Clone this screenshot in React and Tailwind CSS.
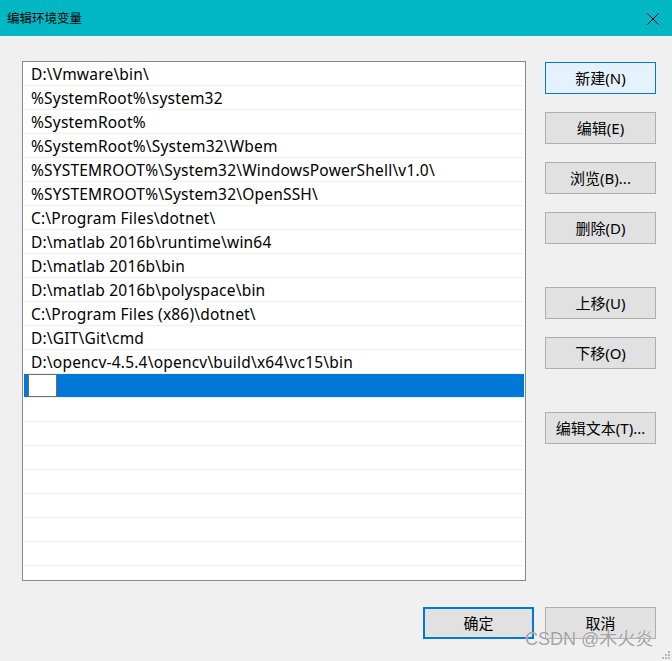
const paths = [
  'D:\\Vmware\\bin\\',
  '%SystemRoot%\\system32',
  '%SystemRoot%',
  '%SystemRoot%\\System32\\Wbem',
  '%SYSTEMROOT%\\System32\\WindowsPowerShell\\v1.0\\',
  '%SYSTEMROOT%\\System32\\OpenSSH\\',
  'C:\\Program Files\\dotnet\\',
  'D:\\matlab 2016b\\runtime\\win64',
  'D:\\matlab 2016b\\bin',
  'D:\\matlab 2016b\\polyspace\\bin',
  'C:\\Program Files (x86)\\dotnet\\',
  'D:\\GIT\\Git\\cmd',
  'D:\\opencv-4.5.4\\opencv\\build\\x64\\vc15\\bin',
]

const font = { fontFamily: '"Noto Sans", "Noto Sans CJK SC", sans-serif' }

const Button = ({ children, focused = false, primary = false, className = '' }) => (
  <div
    className={`w-[111px] h-[32px] flex items-center justify-center text-[15px] text-black ${
      primary
        ? 'border-2 border-[#0078d7] bg-[#e1e1e1]'
        : focused
          ? 'border border-[#0078d7] bg-[#e5f1fb]'
          : 'border border-[#adadad] bg-[#e1e1e1]'
    } ${className}`}
  >
    {children}
  </div>
)

const Row = ({ children }) => (
  <div className="h-[24px] flex items-center pl-[7px] pt-[3px] border-b border-[#f0f0f0] mx-px whitespace-nowrap">
    {children}
  </div>
)

export default function App() {
  const empty = Array.from({ length: 8 })
  return (
    <div className="w-[672px] h-[661px] bg-[#f0f0f0] flex flex-col relative overflow-hidden" style={font}>
      {/* title bar */}
      <div className="h-[36px] bg-[#00b7c3] flex items-center justify-between pl-[7px] pr-[13px] shrink-0">
        <span className="text-[12.5px] text-black" style={{ fontFamily: '"Noto Sans CJK SC", sans-serif' }}>编辑环境变量</span>
        <svg width="12" height="12" viewBox="0 0 12 12" className="mt-px">
          <path d="M0.5 0.5L11.5 11.5M11.5 0.5L0.5 11.5" stroke="#000" strokeWidth="1" />
        </svg>
      </div>

      <div className="flex pt-[25px] pl-[22px]">
        {/* path list */}
        <div className="w-[504px] h-[520px] border border-[#828790] bg-white overflow-hidden text-[15.5px] tracking-[0.2px] text-black">
          {paths.map((p) => (
            <Row key={p}>{p}</Row>
          ))}
          <div className="h-[24px] flex items-center bg-[#0078d7] border-b border-[#f0f0f0] mx-px">
            <div className="ml-[4px] w-[29px] h-[23px] bg-white border border-[#6d6d6d]" />
          </div>
          {empty.map((_, i) => (
            <Row key={i} />
          ))}
        </div>

        {/* side buttons */}
        <div className="ml-[19px] mt-px flex flex-col">
          <Button focused>新建(N)</Button>
          <Button className="mt-[18px]">编辑(E)</Button>
          <Button className="mt-[18px]">浏览(B)...</Button>
          <Button className="mt-[18px]">删除(D)</Button>
          <Button className="mt-[43px]">上移(U)</Button>
          <Button className="mt-[18px]">下移(O)</Button>
          <Button className="mt-[43px]">编辑文本(T)...</Button>
        </div>
      </div>

      {/* dialog footer */}
      <div className="flex pl-[423px] pt-[26px] gap-[11px]">
        <Button primary>确定</Button>
        <Button>取消</Button>
      </div>

      <span
        className="absolute left-[525px] top-[626px] text-[18px] text-[#8a8a8a]/80"
        style={{ fontFamily: '"Liberation Sans", "Noto Sans CJK SC", sans-serif', textShadow: '0 0 1px #fff' }}
      >
        CSDN @木火炎
      </span>

      {/* resize grip */}
      <svg width="8" height="8" viewBox="0 0 8 8" className="absolute right-[2px] bottom-[2px]">
        <rect x="6" y="0" width="2" height="2" fill="#b8b8b8" />
        <rect x="3" y="3" width="2" height="2" fill="#b8b8b8" />
        <rect x="6" y="3" width="2" height="2" fill="#b8b8b8" />
        <rect x="0" y="6" width="2" height="2" fill="#b8b8b8" />
        <rect x="3" y="6" width="2" height="2" fill="#b8b8b8" />
        <rect x="6" y="6" width="2" height="2" fill="#b8b8b8" />
      </svg>
    </div>
  )
}
